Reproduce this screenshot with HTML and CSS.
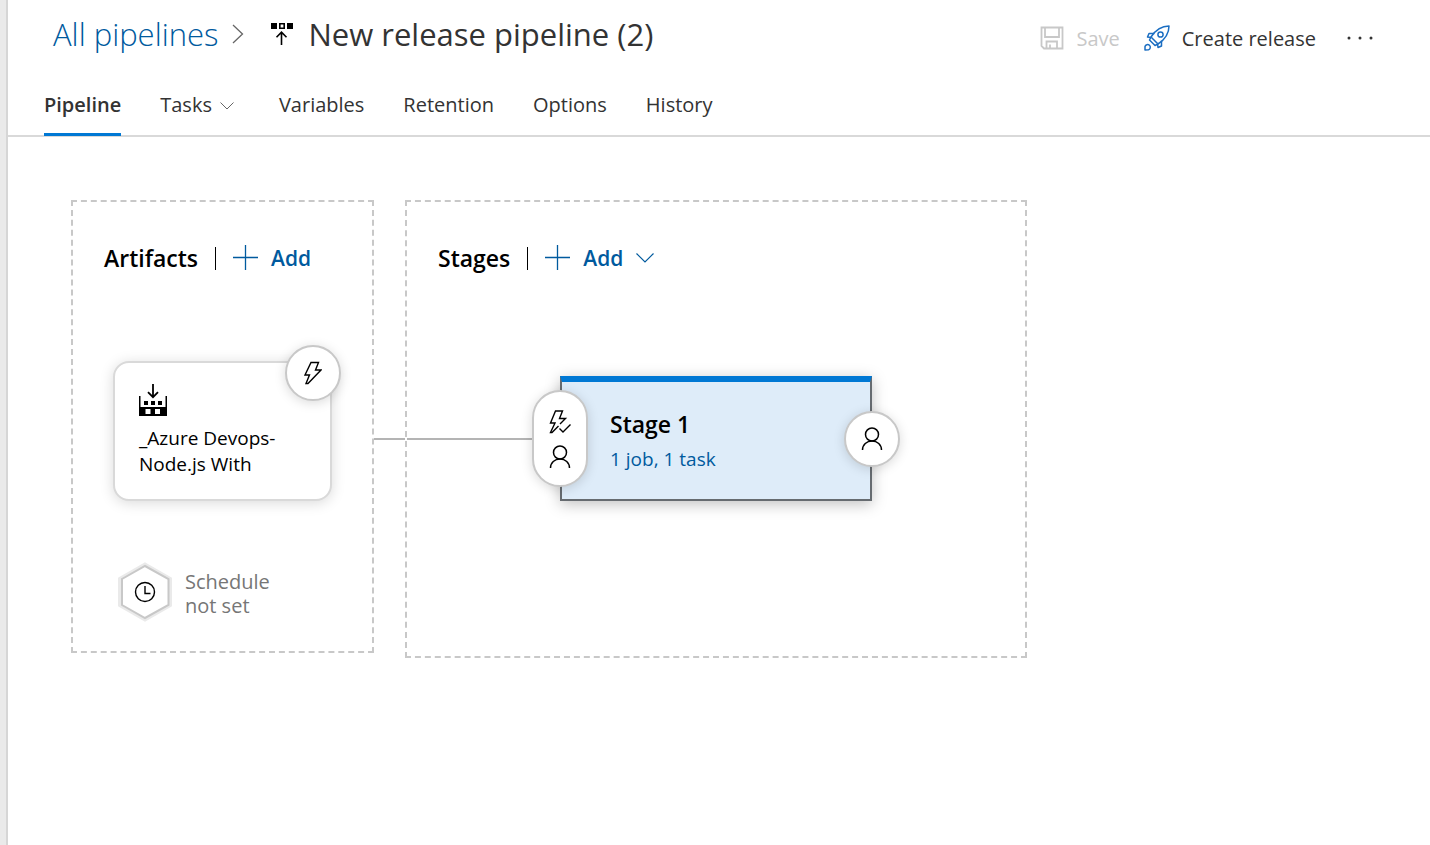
FILE: index.html
```html
<!DOCTYPE html>
<html lang="en">
<head>
  <meta charset="UTF-8" />
  <meta name="viewport" content="width=device-width, initial-scale=1.0"/>
  <title>New release pipeline (2)</title>
  <link rel="stylesheet" href="styles.css">
</head>
<body>
  <div class="sidebar-edge"></div>

  <div class="page">
    <header class="header">
      <div class="title-row">
        <a class="breadcrumb" href="#">All pipelines</a>
        <svg class="breadcrumb-arrow" width="12" height="20" viewBox="0 0 12 20" fill="none" stroke="#666" stroke-width="1.3"><path d="M1 1l9.500 9L1 19"/></svg>
        <svg class="release-icon" width="24" height="24" viewBox="0 0 24 24">
          <path fill="#000" d="M1 1h6v6H1zM17 1h6v6h-6z"/>
          <path fill="none" stroke="#000" stroke-width="1.600" d="M9.800 1.800h4.400v4.400H9.800zM11.500 23V10.500M6.500 15.200l5-5 5 5"/>
        </svg>
        <h1>New release pipeline (2)</h1>

        <div class="actions">
          <button type="button" class="action" disabled>
            <svg width="24" height="24" viewBox="0 0 24 24" fill="none" stroke="#c8c8c8" stroke-width="1.800"><path d="M1.500 1.500h21v21H4l-2.500-2.500zM5 1.500v9.500h14V1.500M6.500 22v-6.500h10.500V22M10 22v-3.500"/></svg>
            <span>Save</span>
          </button>
          <button type="button" class="action">
            <svg width="26" height="26" viewBox="0 0 26 26" fill="none" stroke="#1b6ec2" stroke-width="1.500" stroke-linejoin="round">
              <path d="M25 1C18 1 12.500 3.500 7 12l-1.500 3 5.500 5.500 3-1.500C22.500 13.500 25 8 25 1z"/>
              <circle cx="16.500" cy="9.500" r="2.600"/>
              <path d="M10.500 8.500H5L3.500 12l4 .5M17.500 15.500V21L14 22.500l-.5-4M7.500 12.500l6 6"/>
              <path d="M1 25v-3.500a2.700 2.700 0 1 1 3.500 3.300z"/>
            </svg>
            <span>Create release</span>
          </button>
          <button type="button" class="more" aria-label="More actions">
            <svg width="28" height="6" viewBox="0 0 28 6" fill="#333"><circle cx="3" cy="3" r="1.500"/><circle cx="14" cy="3" r="1.500"/><circle cx="25" cy="3" r="1.500"/></svg>
          </button>
        </div>
      </div>

      <nav class="tabs">
        <a class="tab active" href="#">Pipeline</a>
        <a class="tab tab-menu" href="#">Tasks
          <svg width="14" height="8" viewBox="0 0 14 8" fill="none" stroke="#666"><path d="M.5.5L7 7 13.500.5"/></svg>
        </a>
        <a class="tab" href="#">Variables</a>
        <a class="tab" href="#">Retention</a>
        <a class="tab" href="#">Options</a>
        <a class="tab" href="#">History</a>
      </nav>
    </header>

    <main class="canvas">
      <section class="panel artifacts">
        <div class="panel-header">
          <h2>Artifacts</h2>
          <span class="divider"></span>
          <button type="button" class="add">
            <svg width="26" height="26" viewBox="0 0 26 26" fill="none" stroke="#005a9e" stroke-width="1.300"><path d="M0 12.500h25M12.500 0v25"/></svg>
            <span>Add</span>
          </button>
        </div>

        <div class="artifact-card">
          <svg width="28" height="32" viewBox="0 0 28 32">
            <path fill="#000" d="M0 12h1.500v11h25V12H28v20H0zM5 17h4v4H5zM12 17h4v4h-4zM19 17h4v4h-4z"/>
            <path fill="#fff" d="M6.500 25h5v5h-5zM16 25h5v5h-5z"/>
            <path fill="none" stroke="#000" stroke-width="1.800" d="M14 0v13M9 8.200l5 5 5-5"/>
          </svg>
          <div class="artifact-name">_Azure Devops-<br>Node.js With</div>
          <button type="button" class="badge trigger-badge" aria-label="Continuous deployment trigger">
            <svg width="18" height="24" viewBox="0 0 18 24" fill="none" stroke="#000" stroke-width="1.400"><path d="M7 1.500h7.500L11.500 9H17L4 22.500H2L5.500 14H1z"/></svg>
          </button>
        </div>

        <div class="schedule">
          <svg width="54" height="60" viewBox="0 0 54 60" fill="none">
            <path stroke="#eaeaea" stroke-width="3" d="M27 2l25.500 14.500v27L27 58 1.500 43.500v-27z"/>
            <path fill="#fff" stroke="#c8c8c8" stroke-width="2" d="M27 4l23.500 13v26L27 56 4 43V17z"/>
            <circle cx="27" cy="30" r="9.500" stroke="#000" stroke-width="1.400"/>
            <path stroke="#000" stroke-width="1.400" d="M27 24v7.500h5.500"/>
          </svg>
          <div class="schedule-text">
            <div>Schedule</div>
            <div>not set</div>
          </div>
        </div>
      </section>

      <div class="connector"></div>

      <section class="panel stages">
        <div class="panel-header">
          <h2>Stages</h2>
          <span class="divider"></span>
          <button type="button" class="add">
            <svg width="26" height="26" viewBox="0 0 26 26" fill="none" stroke="#005a9e" stroke-width="1.300"><path d="M0 12.500h25M12.500 0v25"/></svg>
            <span>Add</span>
            <svg width="20" height="10" viewBox="0 0 20 10" fill="none" stroke="#005a9e" stroke-width="1.200"><path d="M1.500.5L10 9 18.500.5"/></svg>
          </button>
        </div>

        <div class="stage-row">
          <div class="stage-line"></div>
          <div class="stage-card">
            <h3>Stage 1</h3>
            <a href="#">1 job, 1 task</a>
            <button type="button" class="badge pre-badge" aria-label="Pre-deployment conditions">
              <svg width="24" height="24" viewBox="0 0 24 24" fill="none" stroke="#000" stroke-width="1.400"><path d="M12 14l5.500-5.500h-6L14.500 1H7.500L2.500 13H7L2.500 22.500h1.500l6.500-6.500M11.500 18.500l3.500 3.500 7.500-7.500"/></svg>
              <svg width="22" height="24" viewBox="0 0 22 24" fill="none" stroke="#000" stroke-width="1.500"><circle cx="11" cy="7.500" r="6.500"/><path d="M1.500 23c0-5.500 4.200-9 9.500-9s9.500 3.500 9.500 9"/></svg>
            </button>
            <button type="button" class="badge post-badge" aria-label="Post-deployment conditions">
              <svg width="22" height="24" viewBox="0 0 22 24" fill="none" stroke="#000" stroke-width="1.500"><circle cx="11" cy="7.500" r="6.500"/><path d="M1.500 23c0-5.500 4.200-9 9.500-9s9.500 3.500 9.500 9"/></svg>
            </button>
          </div>
        </div>
      </section>
    </main>
  </div>
</body>
</html>
```

FILE: styles.css
```css
* {
  margin: 0;
  padding: 0;
  box-sizing: border-box;
}

body {
  display: flex;
  min-height: 100vh;
  font-family: 'Segoe UI', 'Open Sans', 'Noto Sans', sans-serif;
  font-size: 20px;
  color: #333;
  background-color: #fff;
}

a {
  color: inherit;
  text-decoration: none;
}

button {
  border: none;
  background: none;
  font: inherit;
  color: inherit;
  cursor: pointer;
}

svg {
  display: block;
  flex-shrink: 0;
}

.sidebar-edge {
  flex: 0 0 8px;
  background-color: #eaeaea;
  border-right: 2px solid #d6d6d6;
}

.page {
  flex: 1;
  min-width: 0;
}

.header {
  border-bottom: 2px solid #d9d9d9;
}

.title-row {
  display: flex;
  align-items: center;
  height: 68px;
  padding: 0 56px 0 45px;
  white-space: nowrap;
}

.breadcrumb {
  font-size: 31px;
  font-weight: 300;
  color: #005a9e;
}

.breadcrumb-arrow {
  margin: 0 26px 0 14px;
}

h1 {
  margin-left: 14px;
  font-size: 31px;
  font-weight: 400;
}

.actions {
  display: flex;
  align-items: center;
  gap: 24px;
  margin-left: auto;
  padding-top: 8px;
}

.action {
  display: flex;
  align-items: center;
  gap: 12px;
  font-size: 20px;
}

.action:disabled {
  color: #c8c8c8;
  cursor: default;
}

.more {
  margin-left: 6px;
}

.tabs {
  display: flex;
  gap: 39px;
  padding-left: 36px;
}

.tab {
  height: 68px;
  margin-bottom: -1px;
  font-size: 20px;
  line-height: 74px;
}

.tab-menu {
  display: flex;
  gap: 8px;
  padding-right: 6px;
}

.tab-menu svg {
  margin-top: 34px;
}

.tab.active {
  font-weight: 600;
  border-bottom: 3px solid #0078d4;
}

.canvas {
  display: flex;
  align-items: flex-start;
  padding: 63px;
}

.panel {
  border: 2px dashed #c8c8c8;
}

.artifacts {
  width: 303px;
  padding-bottom: 29px;
}

.stages {
  width: 622px;
  padding-bottom: 155px;
}

.connector {
  width: 31px;
  height: 2px;
  margin-top: 238px;
  background-color: #b4b4b4;
}

.panel-header {
  display: flex;
  align-items: center;
  gap: 17px;
  padding: 40px 31px 0;
  height: 72px;
  color: #000;
}

h2 {
  font-size: 23px;
  font-weight: 600;
}

.divider {
  width: 1px;
  height: 23px;
  background-color: #000;
}

.add {
  display: flex;
  align-items: center;
  gap: 12px;
  font-size: 21px;
  font-weight: 600;
  color: #005a9e;
}

.artifact-card {
  position: relative;
  width: 219px;
  height: 140px;
  margin: 87px 0 0 40px;
  padding: 21px 24px;
  border: 2px solid #d9d9d9;
  border-radius: 16px;
  background-color: #fff;
  box-shadow: 0 2px 14px rgba(0, 0, 0, 0.15);
}

.artifact-name {
  margin-top: 9px;
  font-size: 19px;
  line-height: 26px;
  color: #000;
  white-space: nowrap;
}

.badge {
  position: absolute;
  display: flex;
  flex-direction: column;
  align-items: center;
  justify-content: center;
  gap: 11px;
  width: 56px;
  height: 56px;
  border: 2px solid #c8c8c8;
  border-radius: 28px;
  background-color: #fff;
  box-shadow: 0 2px 12px rgba(0, 0, 0, 0.15);
}

.trigger-badge {
  top: -18px;
  right: -11px;
}

.schedule {
  display: flex;
  align-items: center;
  gap: 13px;
  margin: 61px 0 0 45px;
  font-size: 20px;
  line-height: 24px;
  color: #767676;
}

.schedule-text {
  padding-top: 3px;
}

.stage-row {
  display: flex;
  align-items: center;
  margin-top: 102px;
}

.stage-line {
  width: 153px;
  height: 2px;
  background-color: #b4b4b4;
}

.stage-card {
  position: relative;
  width: 312px;
  height: 125px;
  padding: 26px 48px;
  border: 2px solid #666b70;
  border-top: 6px solid #0078d4;
  background-color: #deecf9;
  box-shadow: 0 3px 14px rgba(0, 0, 0, 0.25);
}

h3 {
  font-size: 23px;
  font-weight: 600;
  line-height: 32px;
  color: #000;
}

.stage-card a {
  font-size: 19px;
  line-height: 38px;
  color: #005a9e;
}

.pre-badge {
  top: 8px;
  left: -30px;
  height: 97px;
  padding-top: 2px;
}

.post-badge {
  top: 29px;
  right: -30px;
}
```
